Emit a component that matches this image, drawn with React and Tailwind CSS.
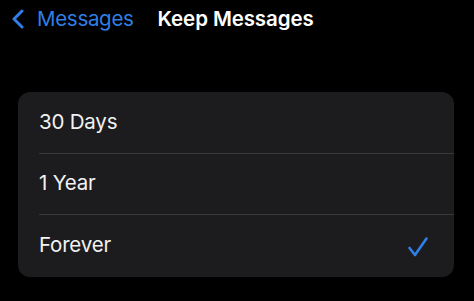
export default function App() {
  const options = [
    { label: "30 Days", selected: false },
    { label: "1 Year", selected: false },
    { label: "Forever", selected: true },
  ];

  return (
    <div
      className="w-[474px] h-[301px] bg-black text-white overflow-hidden"
      style={{ fontFamily: "Inter, 'Noto Sans', sans-serif" }}
    >
      {/* nav bar */}
      <div className="flex items-center h-[38px] pl-[10px]">
        <svg width="15" height="20" viewBox="0 0 15 20" className="shrink-0">
          <path
            d="M12 2 L4 10 L12 18"
            fill="none"
            stroke="#2f7fe6"
            strokeWidth="3"
            strokeLinecap="round"
            strokeLinejoin="round"
          />
        </svg>
        <span className="ml-[12px] text-[20.5px] text-[#2f7fe6] tracking-[-0.3px]">Messages</span>
        <span className="ml-[24px] text-[20.5px] font-semibold tracking-[-0.1px]">Keep Messages</span>
      </div>

      <div className="pl-[18px] pt-[54px] pr-[20px]">
        <div className="rounded-[12px] bg-[#1c1c1e] overflow-hidden">
          {options.map((o, i) => (
            <div key={o.label} className="pl-[21px]">
              <div
                className={
                  "flex items-center justify-between h-[61.5px] pr-[25px] " +
                  (i < options.length - 1 ? "border-b border-[#38383a]" : "")
                }
              >
                <span className="text-[20.5px] text-[#f2f2f2] tracking-[-0.2px]">{o.label}</span>
                {o.selected && (
                  <svg width="22" height="22" viewBox="0 0 22 22" className="mt-[2px]">
                    <path
                      d="M2.5 12 L8 19 L19.5 2.5"
                      fill="none"
                      stroke="#2f7fe6"
                      strokeWidth="2.6"
                      strokeLinecap="round"
                      strokeLinejoin="round"
                    />
                  </svg>
                )}
              </div>
            </div>
          ))}
        </div>
      </div>
    </div>
  );
}
